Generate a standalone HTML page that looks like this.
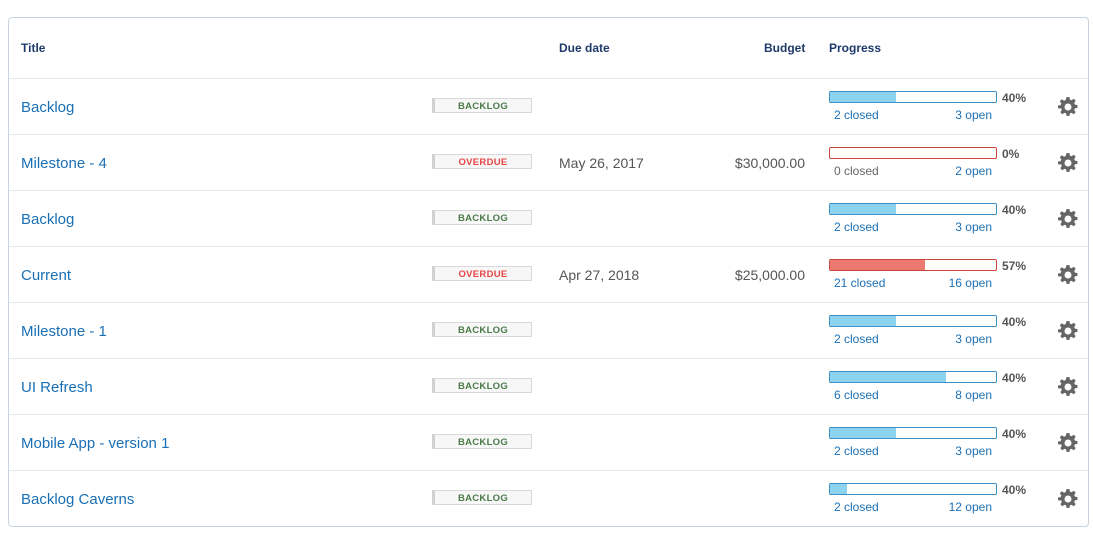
<!DOCTYPE html>
<html><head><meta charset="utf-8"><style>
body{margin:0;background:#fff;font-family:"Liberation Sans",Arial,sans-serif;}
.box{position:absolute;left:8px;top:17px;width:1079px;height:508px;border:1px solid #c8d3df;border-radius:4px;}
.h{position:absolute;top:41px;font-size:12px;font-weight:bold;color:#1f3a6a;}
.row{position:absolute;left:9px;width:1079px;height:56px;border-top:1px solid #e6e9ed;}
.t{position:absolute;left:12px;top:20px;font-size:15px;color:#1a6fb5;}
.b{position:absolute;left:423px;top:19px;width:96px;height:13px;border:1px solid #d8d8d8;border-left:3px solid #d0d0d0;background:#f7f7f7;font-size:9.5px;font-weight:bold;text-align:center;line-height:15px;letter-spacing:.3px;}
.bl{color:#4a7a4a}.od{color:#e84545}
.d{position:absolute;left:550px;top:20px;font-size:14px;color:#555;}
.m{position:absolute;right:283px;top:20px;font-size:14px;color:#555;}
.p{position:absolute;left:820px;top:12px;width:166px;height:10px;border:1px solid #3a8fc5;border-radius:2px;overflow:hidden;background:#fff;}
.p i{display:block;height:100%;background:#8dd3ef;}
.p.r{border-color:#c9463d}.p.r i{background:#ec7a70;}
.pc{position:absolute;left:993px;top:12px;font-size:12px;font-weight:bold;color:#555;}
.c{position:absolute;left:825px;top:29px;font-size:12px;color:#1a6fb5;}
.c.g{color:#666}
.o{position:absolute;right:96px;top:29px;font-size:12px;color:#1a6fb5;}
.gear{position:absolute;left:1049px;top:18px;}
</style></head><body>
<div class="box"></div>
<div class="h" style="left:21px">Title</div>
<div class="h" style="left:559px">Due date</div>
<div class="h" style="left:764px">Budget</div>
<div class="h" style="left:829px">Progress</div>
<svg width="0" height="0" style="position:absolute"><defs><g id="g"><path fill="#666" d="M8.6 0h2.8l.5 2.6 1.6.7 2.2-1.5 2 2-1.5 2.2.7 1.6 2.6.5v2.8l-2.6.5-.7 1.6 1.5 2.2-2 2-2.2-1.5-1.6.7-.5 2.6H8.6l-.5-2.6-1.6-.7-2.2 1.5-2-2 1.5-2.2-.7-1.6L0 11.4V8.6l2.6-.5.7-1.6-1.5-2.2 2-2 2.2 1.5 1.6-.7z M10 6.5a3.5 3.5 0 1 0 0 7a3.5 3.5 0 1 0 0-7z" fill-rule="evenodd"/></g></defs></svg>

<div class="row" style="top:78px"><div class="t">Backlog</div><div class="b bl">BACKLOG</div><div class="p"><i style="width:40%"></i></div><div class="pc">40%</div><div class="c">2 closed</div><div class="o">3 open</div><svg class="gear" width="20" height="20"><use href="#g"/></svg></div>
<div class="row" style="top:134px"><div class="t">Milestone - 4</div><div class="b od">OVERDUE</div><div class="d">May 26, 2017</div><div class="m">$30,000.00</div><div class="p r"><i style="width:0"></i></div><div class="pc">0%</div><div class="c g">0 closed</div><div class="o">2 open</div><svg class="gear" width="20" height="20"><use href="#g"/></svg></div>
<div class="row" style="top:190px"><div class="t">Backlog</div><div class="b bl">BACKLOG</div><div class="p"><i style="width:40%"></i></div><div class="pc">40%</div><div class="c">2 closed</div><div class="o">3 open</div><svg class="gear" width="20" height="20"><use href="#g"/></svg></div>
<div class="row" style="top:246px"><div class="t">Current</div><div class="b od">OVERDUE</div><div class="d">Apr 27, 2018</div><div class="m">$25,000.00</div><div class="p r"><i style="width:57%"></i></div><div class="pc">57%</div><div class="c">21 closed</div><div class="o">16 open</div><svg class="gear" width="20" height="20"><use href="#g"/></svg></div>
<div class="row" style="top:302px"><div class="t">Milestone - 1</div><div class="b bl">BACKLOG</div><div class="p"><i style="width:40%"></i></div><div class="pc">40%</div><div class="c">2 closed</div><div class="o">3 open</div><svg class="gear" width="20" height="20"><use href="#g"/></svg></div>
<div class="row" style="top:358px"><div class="t">UI Refresh</div><div class="b bl">BACKLOG</div><div class="p"><i style="width:70%"></i></div><div class="pc">40%</div><div class="c">6 closed</div><div class="o">8 open</div><svg class="gear" width="20" height="20"><use href="#g"/></svg></div>
<div class="row" style="top:414px"><div class="t">Mobile App - version 1</div><div class="b bl">BACKLOG</div><div class="p"><i style="width:40%"></i></div><div class="pc">40%</div><div class="c">2 closed</div><div class="o">3 open</div><svg class="gear" width="20" height="20"><use href="#g"/></svg></div>
<div class="row" style="top:470px"><div class="t">Backlog Caverns</div><div class="b bl">BACKLOG</div><div class="p"><i style="width:10%"></i></div><div class="pc">40%</div><div class="c">2 closed</div><div class="o">12 open</div><svg class="gear" width="20" height="20"><use href="#g"/></svg></div>
</body></html>
